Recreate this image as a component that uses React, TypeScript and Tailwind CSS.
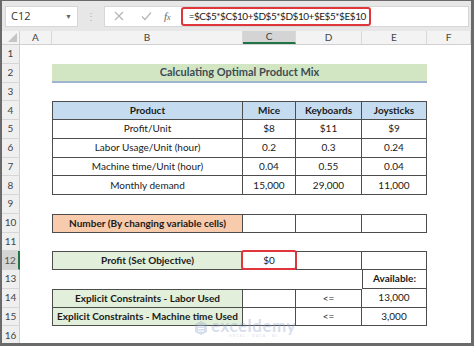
import type { ReactNode } from 'react';

const FONT = { fontFamily: 'Lato, "Noto Sans", sans-serif' };
const ROW_H = 'h-[18.75px]';

// column widths: header, A, B, C, D, E, F
const COLS = ['w-[18px]', 'w-[32px]', 'w-[191px]', 'w-[53px]', 'w-[66px]', 'w-[65px]', 'flex-1'];

type CellProps = {
  w: string;
  l?: boolean;
  t?: boolean;
  box?: boolean;
  bg?: string;
  bold?: boolean;
  children?: ReactNode;
};

const Cell = ({ w, l, t, box, bg = '', bold, children }: CellProps) => (
  <div
    className={`${w} h-full shrink-0 flex items-center justify-center whitespace-nowrap text-[10px] text-[#1a1a1a] ${
      box ? 'border-r border-b border-[#4d4d4d]' : ''
    } ${l ? 'border-l' : ''} ${t ? 'border-t' : ''} ${bg} ${bold ? 'font-bold' : ''}`}
  >
    {children}
  </div>
);

const RowHead = ({ n, active }: { n: number; active?: boolean }) => (
  <div
    className={`${COLS[0]} h-full shrink-0 flex items-center justify-center text-[10px] border-b border-[#d6d6d6] ${
      active ? 'bg-[#d4d4d4] text-[#555] border-r-2 border-r-[#217346]' : 'bg-[#efefef] text-[#444] border-r border-r-[#cfcfcf]'
    }`}
  >
    {n}
  </div>
);

const Row = ({ n, active, children }: { n: number; active?: boolean; children?: ReactNode }) => (
  <div className={`flex ${ROW_H} bg-white`}>
    <RowHead n={n} active={active} />
    <div className={`${COLS[1]} shrink-0`} />
    {children}
  </div>
);

const tableRows = [
  ['Profit/Unit', '$8', '$11', '$9'],
  ['Labor Usage/Unit (hour)', '0.2', '0.3', '0.24'],
  ['Machine time/Unit (hour)', '0.04', '0.55', '0.04'],
  ['Monthly demand', '15,000', '29,000', '11,000'],
];

const App = () => {
  return (
    <div
      className="w-[474px] h-[346px] overflow-hidden bg-white border-t border-l-2 border-r-[3px] border-b-[3px] border-[#6a6a6a] relative"
      style={FONT}
    >
      {/* Formula bar */}
      <div className="h-[30px] bg-[#e7e7e7] flex items-center pl-[3px] pr-[2px] gap-[4px]">
        <div className="w-[73px] h-[21px] bg-white border border-[#d6d6d6] flex items-center justify-between px-[5px]">
          <span className="text-[11px] text-[#333]" style={{ fontFamily: '"Open Sans", sans-serif' }}>C12</span>
          <span className="text-[7px] text-[#666]">▼</span>
        </div>
        <div className="w-[18px] flex justify-center text-[#b0b0b0] text-[10px] leading-none">⋮</div>
        <div className="flex-1 h-[21px] bg-white border border-[#d6d6d6] flex items-center">
          <svg width="10" height="10" viewBox="0 0 10 10" className="ml-[9px]">
            <path d="M1 1L9 9M9 1L1 9" stroke="#b5b5b5" strokeWidth="1.2" />
          </svg>
          <svg width="11" height="10" viewBox="0 0 11 10" className="ml-[17px]">
            <path d="M1 5.5L4 8.5L10 1.5" stroke="#b5b5b5" strokeWidth="1.2" fill="none" />
          </svg>
          <span className="ml-[12px] text-[11px] italic text-[#666]" style={{ fontFamily: '"Liberation Serif", serif' }}>
            f<span className="text-[8px]">x</span>
          </span>
          <div className="ml-[10px] w-[190px] h-[19px] border-2 border-[#e0353b] rounded-[3px] flex items-center pl-[6px] overflow-hidden">
            <span className="text-[10px] tracking-[-0.45px] text-[#222] whitespace-nowrap">
              =$C$5*$C$10+$D$5*$D$10+$E$5*$E$10
            </span>
          </div>
        </div>
      </div>

      {/* Column headers */}
      <div className="flex h-[14px] bg-[#f3f3f3] border-b border-[#d0d0d0] text-[10px] text-[#444]">
        <div className={`${COLS[0]} shrink-0 relative border-r border-[#d0d0d0]`}>
          <svg width="9" height="9" viewBox="0 0 9 9" className="absolute right-[2px] bottom-[2px]">
            <path d="M9 0L9 9L0 9Z" fill="#c4c4c4" />
          </svg>
        </div>
        {['A', 'B', 'C', 'D', 'E', 'F'].map((c, i) => (
          <div
            key={c}
            className={`${COLS[i + 1]} shrink-0 flex items-center justify-center border-r border-[#d9d9d9] ${
              c === 'C' ? 'bg-[#d4d4d4] text-[#444] border-b-2 border-b-[#217346]' : ''
            }`}
          >
            {c}
          </div>
        ))}
      </div>

      <Row n={1} />
      <Row n={2}>
        <div className="w-[375px] h-full shrink-0 bg-[#d3e6c4] border-b-2 border-[#9fb4cf] flex items-center justify-center text-[11px] font-bold text-[#3d4b57]">
          Calculating Optimal Product Mix
        </div>
      </Row>
      <Row n={3} />
      <Row n={4}>
        <Cell w={COLS[2]} box l t bg="bg-[#c5dcf0]" bold>Product</Cell>
        <Cell w={COLS[3]} box t bg="bg-[#c5dcf0]" bold>Mice</Cell>
        <Cell w={COLS[4]} box t bg="bg-[#c5dcf0]" bold>Keyboards</Cell>
        <Cell w={COLS[5]} box t bg="bg-[#c5dcf0]" bold>Joysticks</Cell>
      </Row>
      {tableRows.map((r, i) => (
        <Row key={r[0]} n={5 + i}>
          <Cell w={COLS[2]} box l>{r[0]}</Cell>
          <Cell w={COLS[3]} box>{r[1]}</Cell>
          <Cell w={COLS[4]} box>{r[2]}</Cell>
          <Cell w={COLS[5]} box>{r[3]}</Cell>
        </Row>
      ))}
      <Row n={9} />
      <Row n={10}>
        <Cell w={COLS[2]} box l t bg="bg-[#f8cbad]" bold>Number (By changing variable cells)</Cell>
        <Cell w={COLS[3]} box t />
        <Cell w={COLS[4]} box t />
        <Cell w={COLS[5]} box t />
      </Row>
      <Row n={11} />
      <Row n={12} active>
        <Cell w={COLS[2]} box l t bg="bg-[#e2efda]" bold>Profit (Set Objective)</Cell>
        <div className={`${COLS[3]} h-full shrink-0 relative border-t border-b border-[#4d4d4d]`}>
          <div className="absolute -left-[2px] -top-[2px] -right-[1px] -bottom-[1px] border-2 border-[#e0353b] rounded-[3px] bg-white flex items-center justify-center text-[10px] text-[#1a1a1a]">
            $0
          </div>
        </div>
        <Cell w={COLS[4]} box l t />
        <Cell w={COLS[5]} box t />
      </Row>
      <Row n={13}>
        <div className={`${COLS[2]} shrink-0`} />
        <div className={`${COLS[3]} shrink-0`} />
        <div className={`${COLS[4]} shrink-0`} />
        <Cell w={COLS[5]} box l bold>Available:</Cell>
      </Row>
      <Row n={14}>
        <Cell w={COLS[2]} box l t bg="bg-[#e2efda]" bold>Explicit Constraints - Labor Used</Cell>
        <Cell w={COLS[3]} box t />
        <Cell w={COLS[4]} box t>&lt;=</Cell>
        <Cell w={COLS[5]} box>13,000</Cell>
      </Row>
      <Row n={15}>
        <Cell w={COLS[2]} box l bg="bg-[#e2efda]" bold>Explicit Constraints - Machine time Used</Cell>
        <Cell w={COLS[3]} box />
        <Cell w={COLS[4]} box>&lt;=</Cell>
        <Cell w={COLS[5]} box>3,000</Cell>
      </Row>
      <Row n={16} />

      {/* Watermark */}
      <div className="absolute left-[191px] top-[316px] flex items-center gap-[2px] opacity-35 pointer-events-none">
        <svg width="16" height="16" viewBox="0 0 16 16">
          <path d="M2 4L8 1L14 4L14 12L8 15L2 12Z" fill="#8ea2c8" />
          <path d="M5 6L11 6M5 8.5L11 8.5M5 11L11 11" stroke="#fff" strokeWidth="1" />
        </svg>
        <div className="flex flex-col items-center leading-none">
          <span className="text-[17px] text-[#8ea2c8] font-bold tracking-[0.5px]">exceldemy</span>
          <span className="text-[4px] text-[#8ea2c8] tracking-[1px]">EXCEL · DATA · BI</span>
        </div>
      </div>
    </div>
  );
};

export default App;
